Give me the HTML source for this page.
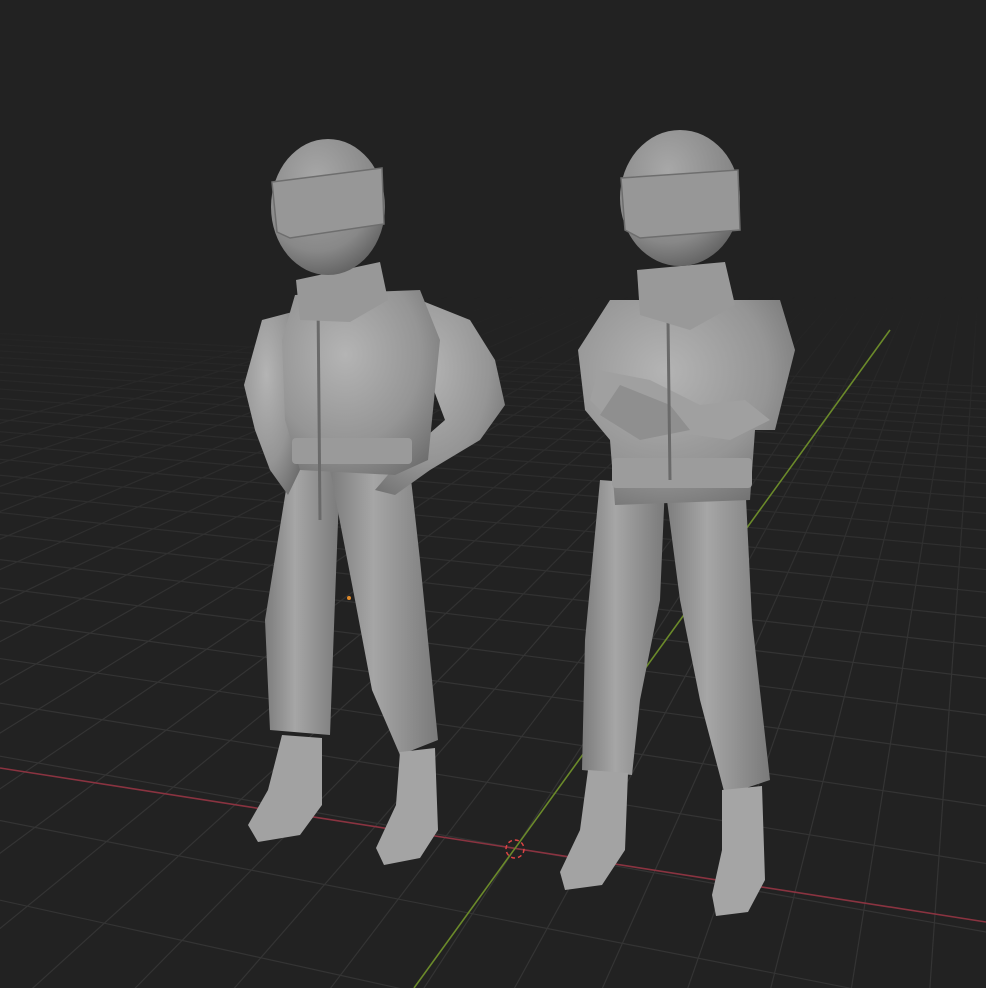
<!DOCTYPE html>
<html><head><meta charset="utf-8"><style>
html,body{margin:0;padding:0;background:#222;width:986px;height:988px;overflow:hidden}
svg{display:block;overflow:hidden}
</style></head><body>
<svg id="s" width="986" height="988" viewBox="0 0 986 988" xmlns="http://www.w3.org/2000/svg">
<defs>
<linearGradient id="fade" x1="0" y1="0" x2="0" y2="1">
<stop offset="0.3" stop-color="#fff" stop-opacity="0"/><stop offset="0.42" stop-color="#fff" stop-opacity="0.5"/><stop offset="0.65" stop-color="#fff" stop-opacity="1"/></linearGradient>
<mask id="m"><rect width="986" height="988" fill="url(#fade)"/></mask>
<radialGradient id="g" cx="0.4" cy="0.35" r="0.8">
<stop offset="0" stop-color="#b4b4b4"/><stop offset="0.6" stop-color="#959595"/><stop offset="1" stop-color="#6a6a6a"/></radialGradient>
<radialGradient id="hg" cx="0.4" cy="0.3" r="0.75">
<stop offset="0" stop-color="#a8a8a8"/><stop offset="0.7" stop-color="#888"/><stop offset="1" stop-color="#5e5e5e"/></radialGradient>
<linearGradient id="lg" x1="0" y1="0" x2="1" y2="0">
<stop offset="0" stop-color="#7c7c7c"/><stop offset="0.4" stop-color="#a6a6a6"/><stop offset="1" stop-color="#7a7a7a"/></linearGradient>
</defs>
<rect width="986" height="988" fill="#222"/>
<g id="grid" mask="url(#m)" stroke="#343434" stroke-width="1.2" fill="none"></g>
<line x1="0" y1="768" x2="986" y2="922" stroke="#8a3340" stroke-width="1.6"/>
<line x1="414" y1="988" x2="890" y2="330" stroke="#6b8a2a" stroke-width="1.6"/>

<g fill="url(#g)">
<path d="M290 465 L340 470 L335 600 L330 735 L270 730 L265 620 Z" fill="url(#lg)"/>
<path d="M330 470 L410 470 L420 560 L438 740 L400 755 L372 690 L355 600 Z" fill="url(#lg)"/>
<path d="M282 735 L322 738 L322 805 L300 835 L258 842 L248 825 L268 790 Z" fill="#a2a2a2"/>
<path d="M400 752 L435 748 L438 830 L420 858 L384 865 L376 848 L396 805 Z" fill="#a4a4a4"/>
<path d="M262 320 L300 310 L300 470 L288 495 L270 470 L255 430 L244 385 Z"/>
<path d="M420 300 L470 320 L495 360 L505 405 L480 440 L430 470 L395 495 L375 490 L405 455 L445 420 L430 380 Z"/>
<path d="M295 295 L420 290 L440 340 L428 460 L395 475 L300 470 L285 420 L282 340 Z"/>
<rect x="292" y="438" width="120" height="26" rx="4" fill="#9a9a9a"/>
<path d="M318 300 L320 520" stroke="#6a6a6a" stroke-width="3"/>
<path d="M296 280 L380 262 L388 300 L350 322 L300 320 Z" fill="#989898"/>
<ellipse cx="328" cy="207" rx="57" ry="68" fill="url(#hg)"/>
<path d="M272 182 L382 168 L384 224 L290 238 L277 232 Z" fill="#979797" stroke="#6e6e6e" stroke-width="1.5"/>
</g>

<g fill="url(#g)">
<path d="M600 480 L665 485 L660 600 L640 700 L632 775 L582 770 L585 640 Z" fill="url(#lg)"/>
<path d="M665 485 L745 478 L752 620 L770 780 L725 795 L700 700 L680 600 Z" fill="url(#lg)"/>
<path d="M588 770 L628 773 L625 850 L602 885 L565 890 L560 872 L580 830 Z" fill="#a3a3a3"/>
<path d="M722 790 L762 786 L765 880 L748 912 L716 916 L712 895 L722 850 Z" fill="#a5a5a5"/>
<path d="M610 300 L780 300 L795 350 L775 430 L755 430 L750 500 L615 505 L610 440 L585 410 L578 350 Z"/>
<rect x="612" y="458" width="140" height="30" rx="4" fill="#9c9c9c"/>
<path d="M598 370 L650 380 L700 405 L745 400 L770 420 L730 440 L660 430 L610 420 L590 400 Z" fill="#a0a0a0"/>
<path d="M620 385 L670 405 L690 430 L640 440 L600 415 Z" fill="#8f8f8f"/>
<path d="M668 320 L670 480" stroke="#6a6a6a" stroke-width="3"/>
<path d="M637 270 L725 262 L735 305 L690 330 L640 315 Z" fill="#999"/>
<ellipse cx="680" cy="198" rx="60" ry="68" fill="url(#hg)"/>
<path d="M621 178 L738 170 L740 230 L640 238 L625 230 Z" fill="#979797" stroke="#6e6e6e" stroke-width="1.5"/>
</g>

<circle cx="515" cy="849" r="9" fill="none" stroke="#d44" stroke-width="1.5" stroke-dasharray="4 3"/>
<circle cx="349" cy="598" r="2" fill="#e08a2a"/>
</svg>
<script>
(function(){
var g=document.getElementById('grid'),ns='http://www.w3.org/2000/svg';
function L(x1,y1,x2,y2){var l=document.createElementNS(ns,'line');l.setAttribute('x1',x1);l.setAttribute('y1',y1);l.setAttribute('x2',x2);l.setAttribute('y2',y2);g.appendChild(l);}
var VB=[990,120],VA=[-3400,150];
function ext(p,v){var dx=p[0]-v[0],dy=p[1]-v[1];var t=(1000-v[1])/dy;L(v[0],v[1],v[0]+dx*t,v[1]+dy*t);}
for(var k=-18;k<=18;k++){var x=515+k*70;var y=768+x*0.1562;ext([x,y],VB);}
for(var k=-3;k<=24;k++){var y=150+698/(1+0.085*k);var x=515+(848-y)*0.7249;ext([x,y],VA);}
})();
</script>
</body></html>
